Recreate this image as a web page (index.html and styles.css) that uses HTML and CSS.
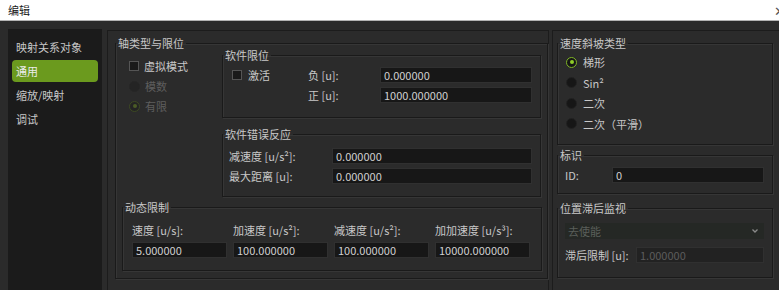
FILE: index.html
```html
<!DOCTYPE html>
<html lang="zh-CN">
  <head>
    <meta charset="UTF-8" />
    <meta name="viewport" content="width=device-width, initial-scale=1.0" />
    <title>编辑</title>
    <link rel="stylesheet" href="styles.css">
  </head>
  <body>
    <div class="titlebar">
      <span>编辑</span>
      <span class="close">✕</span>
    </div>

    <div class="content">
      <nav class="nav">
        <div class="nav-item">映射关系对象</div>
        <div class="nav-item active">通用</div>
        <div class="nav-item">缩放/映射</div>
        <div class="nav-item">调试</div>
      </nav>

      <div class="panel panel-main">
        <fieldset class="group group-axis">
          <legend>轴类型与限位</legend>
          <div class="axis-top">
            <div class="axis-mode">
              <label class="opt"><span class="check"></span>虚拟模式</label>
              <label class="opt disabled"><span class="radio"></span>模数</label>
              <label class="opt disabled"><span class="radio on"></span>有限</label>
            </div>
            <div class="axis-limits">
              <fieldset class="group soft-limit">
                <legend>软件限位</legend>
                <div class="limit-grid">
                  <label class="opt"><span class="check"></span>激活</label>
                  <span>负 [u]:</span>
                  <input class="field" type="text" value="0.000000">
                  <span></span>
                  <span>正 [u]:</span>
                  <input class="field" type="text" value="1000.000000">
                </div>
              </fieldset>
              <fieldset class="group soft-error">
                <legend>软件错误反应</legend>
                <div class="error-grid">
                  <span>减速度 [u/s²]:</span>
                  <input class="field" type="text" value="0.000000">
                  <span>最大距离 [u]:</span>
                  <input class="field" type="text" value="0.000000">
                </div>
              </fieldset>
            </div>
          </div>

          <fieldset class="group dyn">
            <legend>动态限制</legend>
            <div class="dyn-grid">
              <span>速度 [u/s]:</span>
              <span>加速度 [u/s²]:</span>
              <span>减速度 [u/s²]:</span>
              <span>加加速度 [u/s³]:</span>
              <input class="field" type="text" value="5.000000">
              <input class="field" type="text" value="100.000000">
              <input class="field" type="text" value="100.000000">
              <input class="field" type="text" value="10000.000000">
            </div>
          </fieldset>
        </fieldset>
      </div>

      <div class="panel panel-side">
        <fieldset class="group ramp">
          <legend>速度斜坡类型</legend>
          <div class="ramp-list">
            <label class="opt"><span class="radio on"></span>梯形</label>
            <label class="opt"><span class="radio"></span>Sin²</label>
            <label class="opt"><span class="radio"></span>二次</label>
            <label class="opt"><span class="radio"></span>二次（平滑）</label>
          </div>
        </fieldset>

        <fieldset class="group ident">
          <legend>标识</legend>
          <div class="ident-grid">
            <span>ID:</span>
            <input class="field" type="text" value="0">
          </div>
        </fieldset>

        <fieldset class="group lag">
          <legend>位置滞后监视</legend>
          <div class="lag-body">
            <div class="combo">
              <span>去使能</span>
              <svg width="8" height="6" viewBox="0 0 8 6">
                <path d="M1.5 1.5 L4 4 L6.5 1.5" fill="none" stroke="#8a8a8a" stroke-width="1.3"/>
              </svg>
            </div>
            <div class="lag-row">
              <span>滞后限制 [u]:</span>
              <input class="field" type="text" value="1.000000" disabled>
            </div>
          </div>
        </fieldset>
      </div>
    </div>
  </body>
</html>
```

FILE: styles.css
```css
body {
  margin: 0;
  height: 290px;
  overflow: hidden;
  background-color: #2b2b2b;
  font-family: "Noto Sans CJK SC", "Noto Sans", sans-serif;
  font-size: 11px;
  color: #c8c8c8;
}

.titlebar {
  height: 20px;
  background-color: #fff;
  border-bottom: 1px solid #b4b4b4;
  display: flex;
  align-items: center;
  justify-content: space-between;
  padding-left: 8px;
  color: #1a1a1a;
}
.close {
  margin-right: -6px;
  font-size: 13px;
  color: #555;
}

.content {
  display: flex;
  align-items: flex-start;
  padding-top: 8px;
}
.content > * {
  flex-shrink: 0;
}

/* left navigation */
.nav {
  width: 94px;
  height: 280px;
  margin-left: 8px;
  padding: 7px 4px 0;
  box-sizing: border-box;
  background-color: #1b1b1b;
}
.nav-item {
  height: 22px;
  line-height: 22px;
  padding-left: 4px;
  margin-bottom: 2px;
  border-radius: 4px;
}
.nav-item.active {
  background-color: #6b9a1e;
  color: #ececec;
}

/* panels and group boxes */
.panel {
  margin-top: 1px;
  height: 280px;
  border: 1px solid #1c1c1c;
  box-sizing: border-box;
}
.panel-main {
  width: 442px;
  margin-left: 5px;
  padding: 6px 0 0 7px;
}
.panel-side {
  width: 240px;
  margin-left: 3px;
  padding: 6px 0 0 4px;
}

.group {
  margin: 0;
  padding: 0;
  min-width: 0;
  border: 1px solid #1a1a1a;
  box-shadow: 1px 1px 0 #363636, inset 1px 1px 0 #363636;
}
.group legend {
  padding: 0 2px;
  line-height: 12px;
  color: #c8c8c8;
}

.field {
  height: 16px;
  box-sizing: border-box;
  margin: 0;
  padding: 0 3px;
  border: 1px solid #303030;
  background-color: #171717;
  color: #d0d0d0;
  font: inherit;
  outline: none;
}
.field:disabled {
  background-color: #222;
  color: #5c5c5c;
}

.opt {
  display: flex;
  align-items: center;
  gap: 5px;
}
.opt.disabled {
  color: #5e5e5e;
}
.check {
  width: 10px;
  height: 10px;
  box-sizing: border-box;
  border: 1px solid #555;
  background-color: #1a1a1a;
}
.radio {
  width: 11px;
  height: 11px;
  box-sizing: border-box;
  border-radius: 50%;
  border: 1px solid #222;
  background-color: #161616;
  display: flex;
  align-items: center;
  justify-content: center;
}
.radio.on {
  border: 1.5px solid #7fb526;
}
.radio.on::after {
  content: "";
  width: 4px;
  height: 4px;
  border-radius: 50%;
  background-color: #8fcc28;
}
.disabled .radio {
  background-color: #242424;
  border-color: #262626;
}
.disabled .radio.on {
  border-color: #3d4a22;
}
.disabled .radio.on::after {
  background-color: #4b5c26;
}

/* axis type group */
.group-axis {
  width: 433px;
  box-sizing: border-box;
  padding-bottom: 7px;
}
.axis-top {
  display: flex;
}
.axis-mode {
  width: 106px;
  flex-shrink: 0;
  padding: 7px 0 0 13px;
  box-sizing: border-box;
}
.axis-mode .opt {
  height: 20px;
}
.axis-limits {
  width: 319px;
  flex-shrink: 0;
}

.limit-grid {
  display: grid;
  grid-template-columns: 76px 72px 152px;
  grid-auto-rows: 16px;
  row-gap: 4px;
  align-items: center;
  padding: 6px 0 14px 9px;
}
.limit-grid .opt {
  gap: 6px;
}

.soft-error {
  margin-top: 10px;
}
.error-grid {
  display: grid;
  grid-template-columns: 103px 200px;
  grid-auto-rows: 16px;
  row-gap: 4px;
  align-items: center;
  padding: 8px 0 12px 6px;
}

.dyn {
  margin: 4px 5px 0 6px;
}
.dyn-grid {
  display: grid;
  grid-template-columns: repeat(4, 95px);
  grid-auto-rows: 16px;
  column-gap: 6px;
  row-gap: 4px;
  align-items: center;
  padding: 9px 0 12px 9px;
}

/* right column */
.panel-side .group {
  width: 216px;
  box-sizing: border-box;
}
.ramp-list {
  padding: 3px 0 10px 8px;
}
.ramp-list .opt {
  height: 20.5px;
  gap: 6px;
}

.ident {
  margin-top: 4px;
}
.ident-grid {
  display: grid;
  grid-template-columns: 47px 152px;
  align-items: center;
  padding: 6px 0 10px 7px;
}

.lag {
  margin-top: 8px;
}
.lag-body {
  padding: 9px 0 14px 7px;
}
.combo {
  width: 199px;
  height: 16px;
  box-sizing: border-box;
  padding: 0 5px 0 3px;
  background-color: #252825;
  color: #5a5f5a;
  display: flex;
  align-items: center;
  justify-content: space-between;
}
.lag-row {
  margin-top: 8px;
  display: grid;
  grid-template-columns: 71px 128px;
  align-items: center;
}
```
